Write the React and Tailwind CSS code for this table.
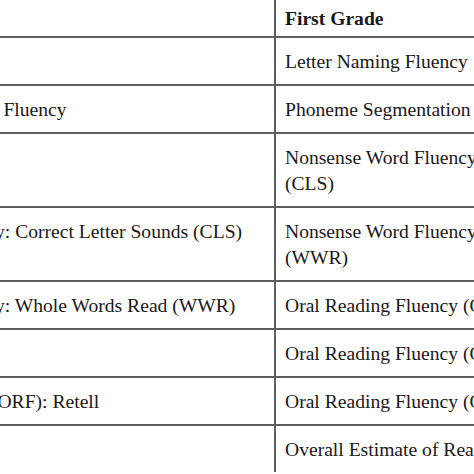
// Cropped assessment table: Kindergarten column runs off the left edge
import React from 'react';

const rows = [
  { left: 'First Sound Fluency', right: ['Letter Naming Fluency'] },
  { left: 'Phoneme Segmentation Fluency', right: ['Phoneme Segmentation'] },
  { left: '', right: ['Nonsense Word Fluency', '(CLS)'] },
  { left: 'Nonsense Word Fluency: Correct Letter Sounds (CLS)', right: ['Nonsense Word Fluency', '(WWR)'] },
  { left: 'Nonsense Word Fluency: Whole Words Read (WWR)', right: ['Oral Reading Fluency (ORF)'] },
  { left: '', right: ['Oral Reading Fluency (ORF)'], tall: true },
  { left: 'Oral Reading Fluency (ORF): Retell', right: ['Oral Reading Fluency (ORF)'] },
  { left: '', right: ['Overall Estimate of Reading'] },
];

const App = () => {
  return (
    <div className="w-[474px] h-[474px] overflow-hidden bg-white text-[#1a1819] text-[19.6px] leading-[26px] [font-family:'Liberation_Serif',serif]">
      <div className="-ml-[197px] w-[729px]">
        <div className="flex h-[36px]">
          <div className="w-[473px] shrink-0 border-r-2 border-[#5e5e5e] pl-[10px] pt-[6px] font-bold whitespace-nowrap">Kindergarten</div>
          <div className="w-[256px] shrink-0 pl-[9px] pr-[9px] pt-[6px] font-bold">First Grade</div>
        </div>
        {rows.map((r, i) => (
          <div key={i} className="flex border-t-2 border-[#5e5e5e]">
            <div className={`w-[473px] shrink-0 border-r-2 border-[#5e5e5e] pl-[10px] pt-[11px] whitespace-nowrap ${r.tall ? 'pb-[19px]' : 'pb-[9px]'}`}>
              {r.left}
            </div>
            <div className="w-[256px] shrink-0 pl-[9px] pr-[9px] pt-[11px] pb-[9px]">
              {r.right.map((t, j) => <div key={j} className="whitespace-nowrap">{t}</div>)}
            </div>
          </div>
        ))}
      </div>
    </div>
  );
};

export default App;
